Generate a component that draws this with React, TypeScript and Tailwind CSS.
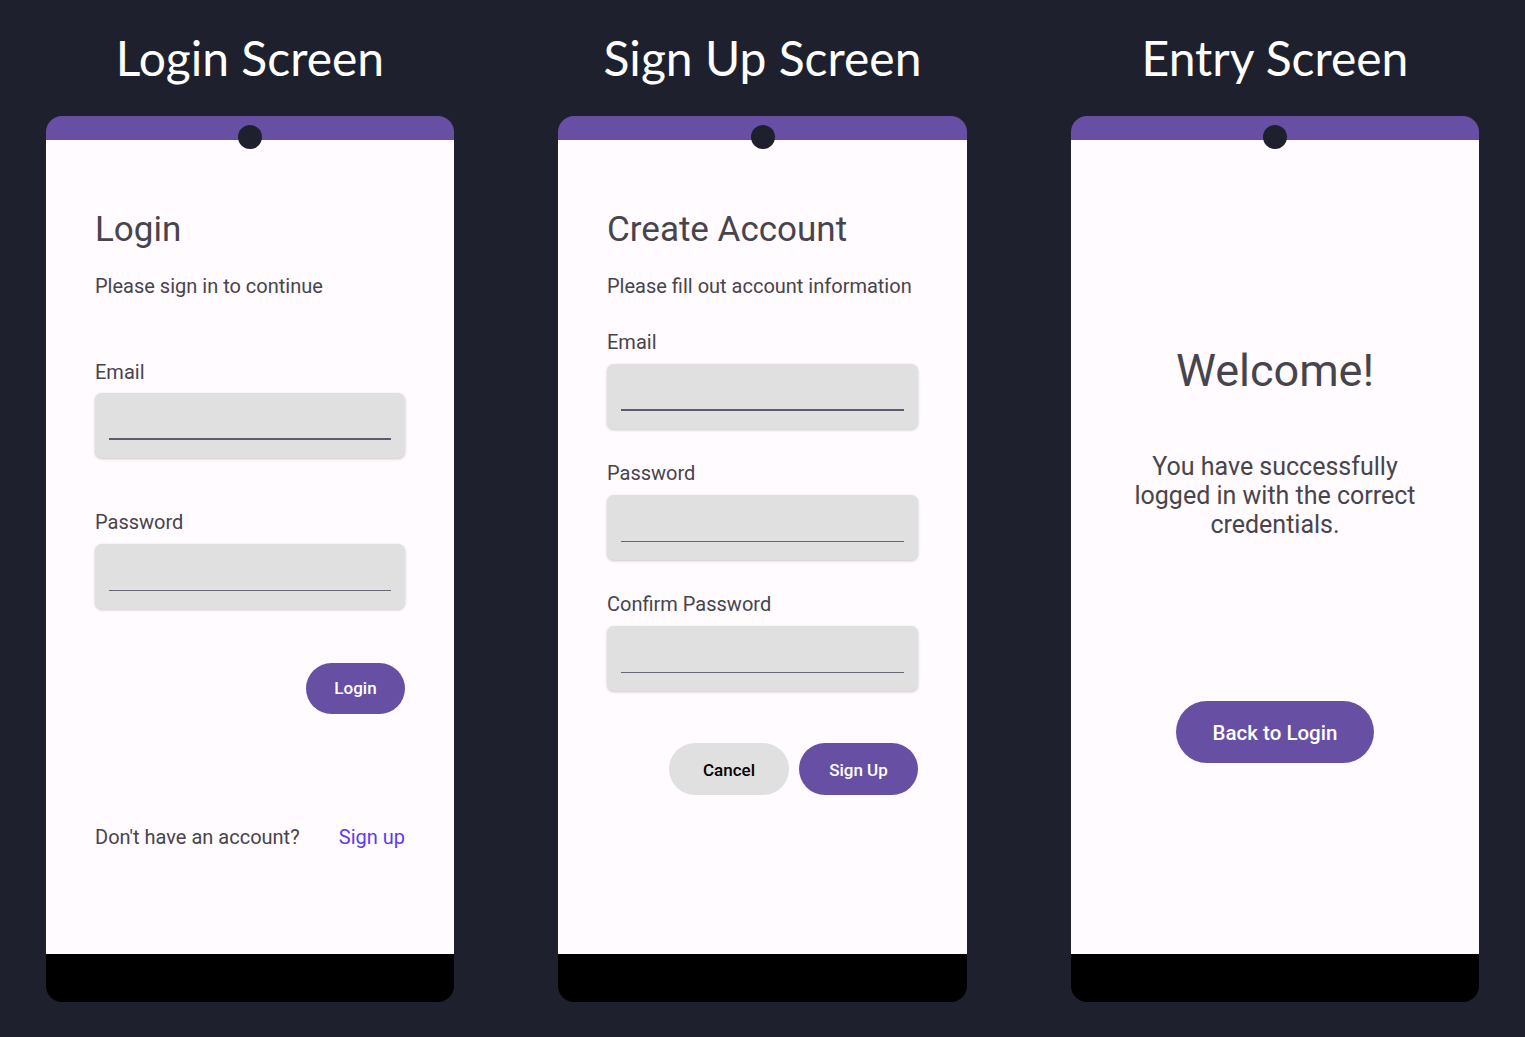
import React from "react";

const Field = ({ thick }: { thick?: boolean }) => (
  <div className="h-[65px] w-full rounded-[7px] bg-[#e0e0e0] shadow-[0_1px_3px_rgba(0,0,0,0.22)] flex flex-col justify-end px-[14px] pb-[18px]">
    <div className={thick ? "h-[2px] w-full bg-[#5f5a70]" : "h-px w-full bg-[#6a6775]"} />
  </div>
);

const Phone = ({ children }: { children: React.ReactNode }) => (
  <div className="w-full h-[886px] flex flex-col">
    <div className="relative h-[24px] rounded-t-[16px] bg-[#6750a4] shrink-0">
      <div className="absolute left-1/2 top-[9px] -translate-x-1/2 w-[24px] h-[24px] rounded-full bg-[#1e212d]" />
    </div>
    <div className="flex-1 bg-[#fffbfe] flex flex-col px-[49px] font-['Roboto',sans-serif] text-[#47444d]">
      {children}
    </div>
    <div className="h-[48px] rounded-b-[16px] bg-black shrink-0" />
  </div>
);

const Column = ({ title, wide, children }: { title: string; wide?: boolean; children: React.ReactNode }) => (
  <div className={wide ? "w-[409px] flex flex-col" : "w-[408px] flex flex-col"}>
    <h1 className="text-center text-white text-[48px] leading-none font-['Lato',sans-serif] font-normal h-[48px]">
      {title}
    </h1>
    <div className="mt-[34px]">
      <Phone>{children}</Phone>
    </div>
  </div>
);

export default function App() {
  return (
    <div className="w-[1525px] h-[1037px] bg-[#1e212d] pt-[34px] pl-[46px] flex gap-[104px] overflow-hidden">
      <Column title="Login Screen">
        <div className="mt-[72px] text-[35px] leading-none">Login</div>
        <div className="mt-[29px] text-[20px] leading-none">Please sign in to continue</div>
        <div className="mt-[66px] text-[20px] leading-none">Email</div>
        <div className="mt-[11px]">
          <Field thick />
        </div>
        <div className="mt-[54px] text-[20px] leading-none">Password</div>
        <div className="mt-[12px]">
          <Field />
        </div>
        <div className="mt-[54px] flex justify-end">
          <button className="h-[51px] w-[99px] rounded-full bg-[#6750a4] text-white text-[17px] font-medium">
            Login
          </button>
        </div>
        <div className="mt-[113px] flex justify-between text-[20px] leading-none">
          <span>Don't have an account?</span>
          <span className="text-[#5e3af0]">Sign up</span>
        </div>
      </Column>

      <Column title="Sign Up Screen" wide>
        <div className="mt-[72px] text-[35px] leading-none">Create Account</div>
        <div className="mt-[29px] text-[20px] leading-none">Please fill out account information</div>
        <div className="mt-[36px] text-[20px] leading-none">Email</div>
        <div className="mt-[12px]">
          <Field thick />
        </div>
        <div className="mt-[34px] text-[20px] leading-none">Password</div>
        <div className="mt-[12px]">
          <Field />
        </div>
        <div className="mt-[34px] text-[20px] leading-none">Confirm Password</div>
        <div className="mt-[12px]">
          <Field />
        </div>
        <div className="mt-[52px] flex justify-end gap-[10px]">
          <button className="h-[52px] w-[120px] rounded-full bg-[#e0e0e0] text-black text-[17px] font-medium pt-[3px]">
            Cancel
          </button>
          <button className="h-[52px] w-[119px] rounded-full bg-[#6750a4] text-white text-[17px] font-medium pt-[3px]">
            Sign Up
          </button>
        </div>
      </Column>

      <Column title="Entry Screen">
        <div className="mt-[208px] text-[45px] leading-none text-center">Welcome!</div>
        <div className="mt-[59px] text-[25px] leading-[29px] text-center">
          You have successfully logged in with the correct credentials.
        </div>
        <div className="mt-[162px] flex justify-center">
          <button className="h-[62px] w-[198px] rounded-full bg-[#6750a4] text-white text-[20.5px] font-medium pt-[2px]">
            Back to Login
          </button>
        </div>
      </Column>
    </div>
  );
}
